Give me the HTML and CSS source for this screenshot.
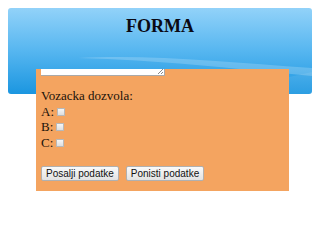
FILE: index.html
```html
<!DOCTYPE html>
<html lang="hr">
<head>
    <meta charset="UTF-8">
    <meta name="viewport" content="width=device-width, initial-scale=1.0">
    <title>Forma</title>
    <link rel="stylesheet" href="styles.css">
</head>
<body>
    <div class="slide">
        <!-- Plavi naslov -->
        <div class="banner">
            <svg class="wave" viewBox="0 0 304 86" preserveAspectRatio="none">
                <path d="M70 50 C140 46 220 54 304 60 L304 68 C220 60 150 52 70 50 Z" fill="#ffffff" opacity="0.2"/>
                <path d="M150 86 C220 80 270 72 304 64 L304 86 Z" fill="#ffffff" opacity="0.08"/>
            </svg>
            <h1>FORMA</h1>
        </div>

        <!-- Forma -->
        <form class="form">
            <div class="textarea"><span class="grip"></span></div>
            <p class="label">Vozacka dozvola:</p>
            <div class="row">A:<input type="checkbox" class="check"></div>
            <div class="row">B:<input type="checkbox" class="check"></div>
            <div class="row">C:<input type="checkbox" class="check"></div>
            <div class="buttons">
                <button type="button" class="btn">Posalji podatke</button>
                <button type="button" class="btn">Ponisti podatke</button>
            </div>
        </form>
    </div>
</body>
</html>
```

FILE: styles.css
```css
body {
    margin: 0;
    padding: 0;
    background: #fff;
    font-family: 'Liberation Serif', 'Times New Roman', serif;
}

.slide {
    width: 320px;
    height: 240px;
    overflow: hidden;
}

/* Naslov */
.banner {
    position: relative;
    margin: 8px 8px 0;
    height: 86px;
    border-radius: 3px;
    background: linear-gradient(to bottom, #92d2f9, #56b6f0 50%, #1b96e0);
}

.wave {
    position: absolute;
    left: 0;
    top: 0;
    width: 100%;
    height: 100%;
}

h1 {
    position: relative;
    margin: 0;
    padding-top: 7px;
    font-size: 18px;
    line-height: 22px;
    text-align: center;
    color: #0a0a14;
}

/* Forma */
.form {
    position: relative;
    margin: -25px 0 0 36px;
    width: 248px;
    padding: 0 0 10px 5px;
    background: #f4a460;
    color: #1a120a;
    font-size: 13px;
    line-height: 15.5px;
}

.textarea {
    position: relative;
    width: 123px;
    height: 6px;
    background: #fff;
    border-right: 1px solid #a9a9a9;
    border-bottom: 1px solid #a9a9a9;
}

.grip {
    position: absolute;
    right: 1px;
    bottom: 1px;
    width: 5px;
    height: 5px;
    background: linear-gradient(135deg, transparent 45%, #888 45%, #888 55%, transparent 55%, transparent 70%, #888 70%, #888 80%, transparent 80%);
}

.label {
    margin: 12px 0 0;
}

.check {
    -webkit-appearance: none;
    appearance: none;
    display: inline-block;
    width: 8px;
    height: 8px;
    margin: 0 0 0 3px;
    vertical-align: 0;
    border: 1px solid #b8b8b8;
    background: linear-gradient(to bottom, #f6f6f6, #dedede);
    box-sizing: border-box;
}

.buttons {
    display: flex;
    gap: 7px;
    margin-top: 16px;
}

.btn {
    height: 15px;
    padding: 0 4px;
    font-family: 'Liberation Sans', Arial, sans-serif;
    font-size: 10px;
    line-height: 13px;
    color: #111;
    border: 1px solid #b0b0b0;
    border-radius: 2px;
    background: linear-gradient(to bottom, #fafafa, #e2e2e2);
}
```
